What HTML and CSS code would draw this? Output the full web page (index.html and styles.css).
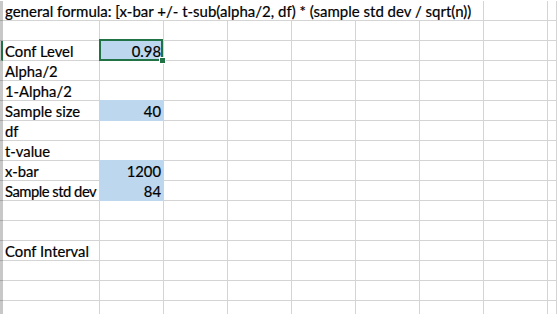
FILE: index.html
```html
<!DOCTYPE html>
<html>
<head>
<meta charset="utf-8">
<link rel="stylesheet" href="styles.css">
</head>
<body>
<div class="sheet">
  <!-- row 1 -->
  <div class="hdr"></div>
  <div class="cell span7 title">general formula: [x-bar +/- t-sub(alpha/2, df) * (sample std dev / sqrt(n))</div>
  <div class="cell"></div><div class="cell"></div>
  <!-- row 2 -->
  <div class="hdr"></div><div class="cell"></div><div class="cell"></div><div class="cell"></div><div class="cell"></div><div class="cell"></div><div class="cell"></div><div class="cell"></div><div class="cell"></div><div class="cell"></div>
  <!-- row 3 -->
  <div class="hdr sel"></div><div class="cell">Conf Level</div><div class="cell num fill active">0.98<span class="handle"></span></div><div class="cell"></div><div class="cell"></div><div class="cell"></div><div class="cell"></div><div class="cell"></div><div class="cell"></div><div class="cell"></div>
  <!-- row 4 -->
  <div class="hdr"></div><div class="cell">Alpha/2</div><div class="cell"></div><div class="cell"></div><div class="cell"></div><div class="cell"></div><div class="cell"></div><div class="cell"></div><div class="cell"></div><div class="cell"></div>
  <!-- row 5 -->
  <div class="hdr"></div><div class="cell">1-Alpha/2</div><div class="cell"></div><div class="cell"></div><div class="cell"></div><div class="cell"></div><div class="cell"></div><div class="cell"></div><div class="cell"></div><div class="cell"></div>
  <!-- row 6 -->
  <div class="hdr"></div><div class="cell">Sample size</div><div class="cell num fill">40</div><div class="cell"></div><div class="cell"></div><div class="cell"></div><div class="cell"></div><div class="cell"></div><div class="cell"></div><div class="cell"></div>
  <!-- row 7 -->
  <div class="hdr"></div><div class="cell">df</div><div class="cell"></div><div class="cell"></div><div class="cell"></div><div class="cell"></div><div class="cell"></div><div class="cell"></div><div class="cell"></div><div class="cell"></div>
  <!-- row 8 -->
  <div class="hdr"></div><div class="cell">t-value</div><div class="cell"></div><div class="cell"></div><div class="cell"></div><div class="cell"></div><div class="cell"></div><div class="cell"></div><div class="cell"></div><div class="cell"></div>
  <!-- row 9 -->
  <div class="hdr"></div><div class="cell">x-bar</div><div class="cell num fill">1200</div><div class="cell"></div><div class="cell"></div><div class="cell"></div><div class="cell"></div><div class="cell"></div><div class="cell"></div><div class="cell"></div>
  <!-- row 10 -->
  <div class="hdr"></div><div class="cell tight">Sample std dev</div><div class="cell num fill">84</div><div class="cell"></div><div class="cell"></div><div class="cell"></div><div class="cell"></div><div class="cell"></div><div class="cell"></div><div class="cell"></div>
  <!-- row 11 -->
  <div class="hdr"></div><div class="cell"></div><div class="cell"></div><div class="cell"></div><div class="cell"></div><div class="cell"></div><div class="cell"></div><div class="cell"></div><div class="cell"></div><div class="cell"></div>
  <!-- row 12 -->
  <div class="hdr"></div><div class="cell"></div><div class="cell"></div><div class="cell"></div><div class="cell"></div><div class="cell"></div><div class="cell"></div><div class="cell"></div><div class="cell"></div><div class="cell"></div>
  <!-- row 13 -->
  <div class="hdr"></div><div class="cell">Conf Interval</div><div class="cell"></div><div class="cell"></div><div class="cell"></div><div class="cell"></div><div class="cell"></div><div class="cell"></div><div class="cell"></div><div class="cell"></div>
  <!-- row 14 -->
  <div class="hdr"></div><div class="cell"></div><div class="cell"></div><div class="cell"></div><div class="cell"></div><div class="cell"></div><div class="cell"></div><div class="cell"></div><div class="cell"></div><div class="cell"></div>
  <!-- row 15 -->
  <div class="hdr"></div><div class="cell"></div><div class="cell"></div><div class="cell"></div><div class="cell"></div><div class="cell"></div><div class="cell"></div><div class="cell"></div><div class="cell"></div><div class="cell"></div>
  <!-- row 16 -->
  <div class="hdr"></div><div class="cell"></div><div class="cell"></div><div class="cell"></div><div class="cell"></div><div class="cell"></div><div class="cell"></div><div class="cell"></div><div class="cell"></div><div class="cell"></div>
</div>
</body>
</html>
```

FILE: styles.css
```css
html, body {
  margin: 0;
  padding: 0;
  background: #ffffff;
  overflow: hidden;
}

.sheet {
  display: grid;
  grid-template-columns: 3px 97px repeat(7, 64px) 9px;
  grid-auto-rows: 20px;
  padding-top: 1px;
  font-family: "Lato", "Liberation Sans", sans-serif;
  font-size: 14.8px;
  color: #000000;
}

.hdr {
  background: #c8c8c8;
  border-bottom: 1px solid #a6a6a6;
  box-sizing: border-box;
}

.hdr.sel {
  background: #c8c8c8;
  border-right: 2px solid #217346;
}

.cell {
  box-sizing: border-box;
  border-right: 1px solid #d4d4d4;
  border-bottom: 1px solid #d4d4d4;
  padding: 0 2px 0 2px;
  display: flex;
  align-items: flex-end;
  white-space: nowrap;
  overflow: hidden;
  line-height: 17px;
  position: relative;
  -webkit-text-stroke: 0.2px #000000;
}

.title {
  font-size: 15px;
}

.tight {
  letter-spacing: -0.5px;
  padding-right: 0;
}

.span7 {
  grid-column: span 7;
  overflow: visible;
}

.num {
  justify-content: flex-end;
  padding-right: 2px;
}

.fill {
  background: #bdd7ee;
  border-right-color: #bdd7ee;
  border-bottom-color: #bdd7ee;
  box-shadow: -1px -1px 0 #bdd7ee;
}

.active {
  overflow: visible;
  z-index: 2;
}

.active::before {
  content: "";
  position: absolute;
  top: -2px;
  left: -1px;
  right: 0;
  bottom: -1px;
  border: 2px solid #217346;
}

.handle {
  position: absolute;
  right: -2px;
  bottom: -3px;
  width: 5px;
  height: 5px;
  background: #217346;
  box-shadow: 0 0 0 1px #ffffff;
}
```
